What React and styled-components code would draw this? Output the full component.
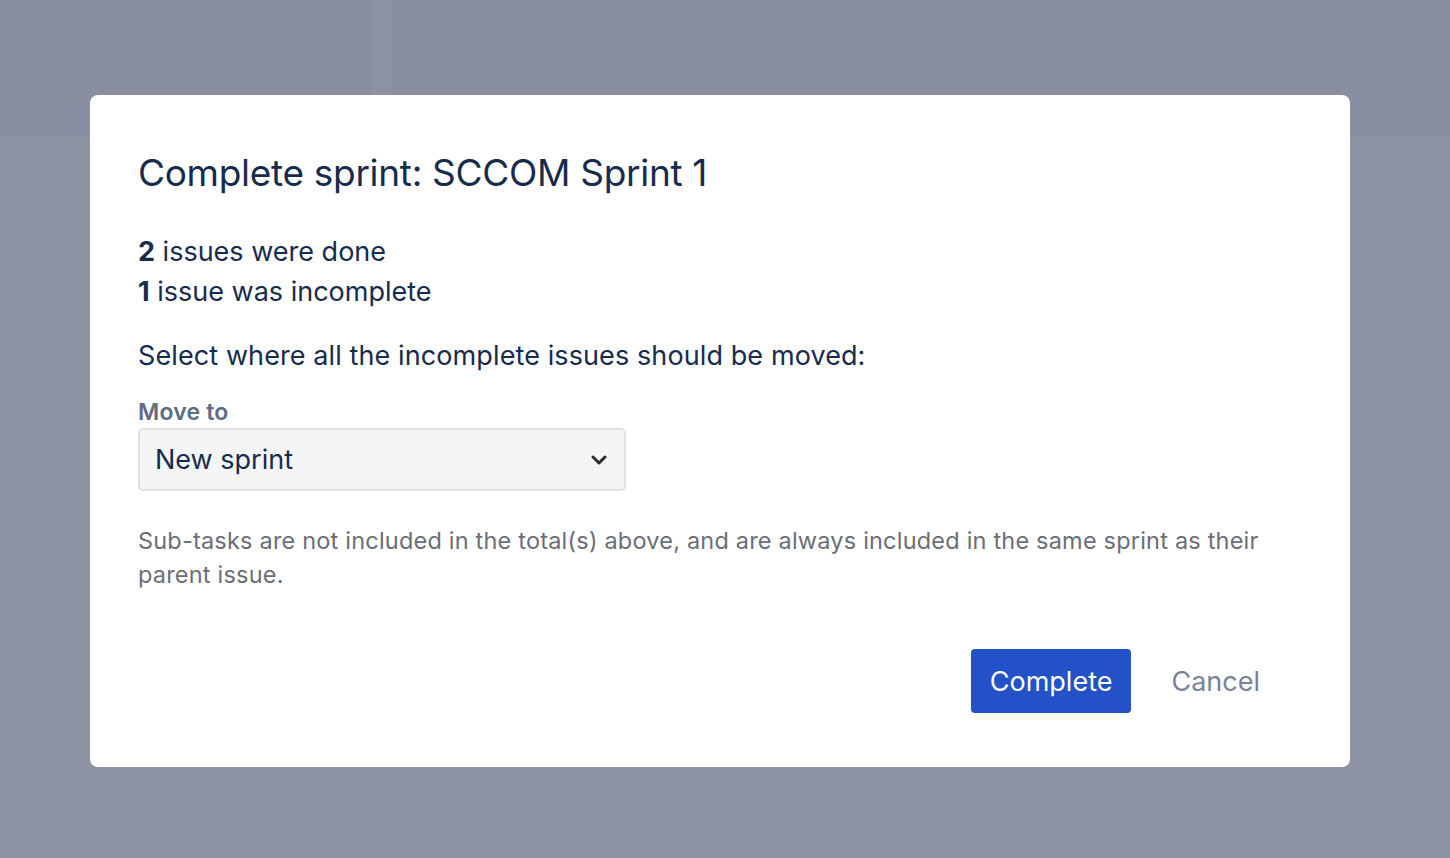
import React from 'react'
import styled, { createGlobalStyle } from 'styled-components'

const GlobalStyle = createGlobalStyle`
  html, body {
    margin: 0;
    padding: 0;
    height: 100%;
    background: #8e94a4;
    font-family: Inter, "Noto Sans", "Liberation Sans", sans-serif;
  }
  * { box-sizing: border-box; }
`;

const Page = styled.div`
  width: 1450px;
  height: 858px;
  position: relative;
  overflow: hidden;
`;

const TopBand = styled.div`
  display: grid;
  grid-template-columns: 372px 20px 1fr;
  height: 137px;
  background: #898fa0;
`;

const Stripe = styled.div`
  background: #8c92a2;
`;

const Modal = styled.div`
  position: absolute;
  left: 90px;
  top: 95px;
  width: 1260px;
  height: 672px;
  background: #ffffff;
  border-radius: 8px;
  padding: 50px 48px 0 48px;
  display: flex;
  flex-direction: column;
  color: #172b4d;
`;

const Title = styled.h1`
  margin: 0;
  font-size: 37px;
  font-weight: 400;
  line-height: 56px;
  letter-spacing: -0.3px;
`;

const Stats = styled.div`
  margin-top: 31px;
  display: flex;
  flex-direction: column;
  font-size: 27px;
  line-height: 40px;
`;

const Prompt = styled.p`
  margin: 24px 0 0;
  font-size: 27px;
  line-height: 40px;
  letter-spacing: 0.1px;
`;

const Label = styled.label`
  margin-top: 20px;
  font-size: 23px;
  font-weight: 600;
  line-height: 32px;
  letter-spacing: 0.2px;
  color: #5e6c84;
`;

const Select = styled.div`
  width: 488px;
  height: 63px;
  background: #f4f5f7;
  border: 2px solid #dfe1e6;
  border-radius: 5px;
  display: flex;
  align-items: center;
  justify-content: space-between;
  padding: 0 16px 0 15px;
  font-size: 27px;
`;

const Note = styled.p`
  margin: 33px 0 0;
  font-size: 23.5px;
  line-height: 34px;
  letter-spacing: 0.2px;
  color: #6b6e76;
  max-width: 1150px;
`;

const Footer = styled.div`
  margin-top: 57px;
  display: flex;
  justify-content: flex-end;
  align-items: center;
  gap: 40px;
  padding-right: 42px;
`;

const Button = styled.button`
  border: none;
  font-family: inherit;
  font-size: 27px;
  height: 64px;
  border-radius: 4px;
  cursor: pointer;
  background: ${p => (p.$primary ? '#2251c8' : 'transparent')};
  color: ${p => (p.$primary ? '#ffffff' : '#7a8296')};
  padding: ${p => (p.$primary ? '0 19px' : '0')};
`;

const Chevron = () => (
  <svg width="18" height="12" viewBox="0 0 18 12">
    <path d="M3 3 L9 9 L15 3" fill="none" stroke="#2b2b2b" strokeWidth="3" strokeLinecap="round" strokeLinejoin="round" />
  </svg>
);

export default function App() {
  return (
    <Page>
      <GlobalStyle />
      <TopBand>
        <div />
        <Stripe />
        <div />
      </TopBand>
      <Modal>
        <Title>Complete sprint: SCCOM Sprint 1</Title>
        <Stats>
          <div><b>2</b> issues were done</div>
          <div><b>1</b> issue was incomplete</div>
        </Stats>
        <Prompt>Select where all the incomplete issues should be moved:</Prompt>
        <Label>Move to</Label>
        <Select>
          <span>New sprint</span>
          <Chevron />
        </Select>
        <Note>
          Sub-tasks are not included in the total(s) above, and are always included in the same sprint as their parent issue.
        </Note>
        <Footer>
          <Button $primary>Complete</Button>
          <Button>Cancel</Button>
        </Footer>
      </Modal>
    </Page>
  )
}
